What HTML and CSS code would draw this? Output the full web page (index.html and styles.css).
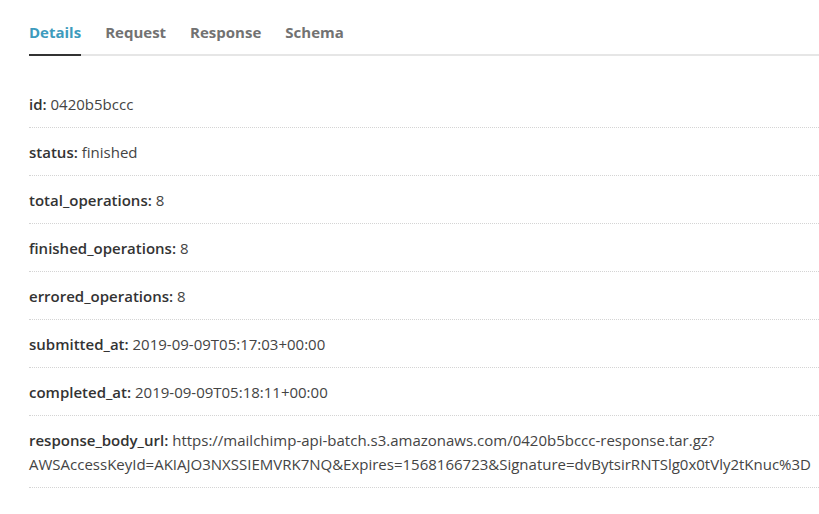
FILE: index.html
```html
<!DOCTYPE html>
<html lang="en">
<head>
<meta charset="utf-8">
<title>Batch details</title>
<link rel="stylesheet" href="styles.css">
</head>
<body>
<div class="panel">
  <nav class="tabs">
    <a class="tab active">Details</a>
    <a class="tab">Request</a>
    <a class="tab">Response</a>
    <a class="tab">Schema</a>
  </nav>
  <ul class="details">
    <li class="row"><span class="key">id:</span> <span class="val">0420b5bccc</span></li>
    <li class="row"><span class="key">status:</span> <span class="val">finished</span></li>
    <li class="row"><span class="key">total_operations:</span> <span class="val">8</span></li>
    <li class="row"><span class="key">finished_operations:</span> <span class="val">8</span></li>
    <li class="row"><span class="key">errored_operations:</span> <span class="val">8</span></li>
    <li class="row"><span class="key">submitted_at:</span> <span class="val">2019-09-09T05:17:03+00:00</span></li>
    <li class="row"><span class="key">completed_at:</span> <span class="val">2019-09-09T05:18:11+00:00</span></li>
    <li class="row"><span class="key">response_body_url:</span> <span class="val">https://mailchimp-api-batch.s3.amazonaws.com/0420b5bccc-response.tar.gz?<br>AWSAccessKeyId=AKIAJO3NXSSIEMVRK7NQ&amp;Expires=1568166723&amp;Signature=dvBytsirRNTSlg0x0tVly2tKnuc%3D</span></li>
  </ul>
</div>
</body>
</html>
```
FILE: styles.css
```css
html, body {
  margin: 0;
  padding: 0;
  background: #fff;
}
body {
  font-family: "Open Sans", "Liberation Sans", sans-serif;
  color: #333;
}
.panel {
  padding-left: 29px;
}
.tabs {
  display: flex;
  gap: 24px;
  border-bottom: 2px solid #e6e6e6;
}
.tab {
  display: block;
  font-size: 15px;
  font-weight: 700;
  line-height: 22px;
  padding: 21px 0 11px;
  margin-bottom: -2px;
  border-bottom: 2px solid transparent;
  color: #727272;
  cursor: pointer;
}
.tab.active {
  color: #3d9bbd;
  border-bottom-color: #333;
}
.details {
  list-style: none;
  margin: 24px 0 0;
  padding: 0;
}
.row {
  font-size: 15px;
  line-height: 24px;
  padding: 12px 0 11px;
  border-bottom: 1px dotted #d4d4d4;
}
.key {
  font-weight: 600;
  color: #333;
}
.val {
  color: #444;
}
```
